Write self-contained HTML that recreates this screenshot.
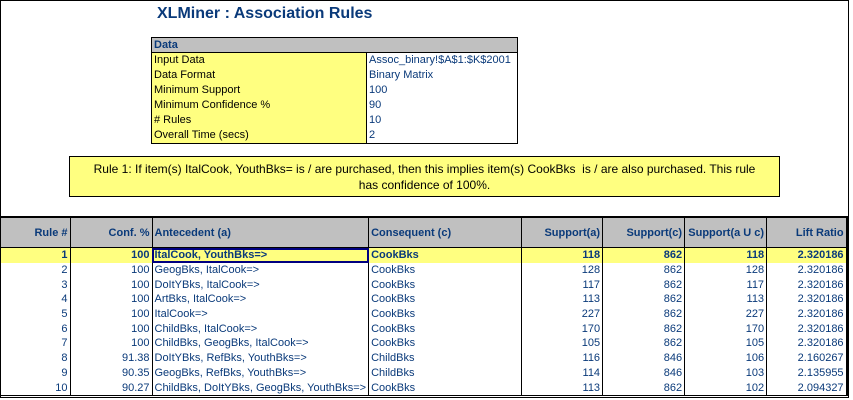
<!DOCTYPE html><html><head><style>
body{margin:0;width:853px;height:400px;background:#fff;position:relative;overflow:hidden;font-family:"Liberation Sans",Arial,sans-serif;font-size:11px;color:#0a3a7a}
.outer{position:absolute;left:0;top:0;width:847px;height:397px;border:1px solid #000;border-bottom:none}
.title{position:absolute;left:157px;top:5px;font-size:16px;font-weight:bold;color:#0a3a7a}
.d{position:absolute;left:151px;top:37px;border-collapse:collapse;border:1px solid #000}
.d td{height:15px;padding:0 2px;line-height:15px;color:#0a3a7a;white-space:nowrap}
.d td.k{background:#ffff80;color:#000;width:210px;border-right:1px solid #000}
.d td.v{width:146px;background:#fff}
.d .h{background:#c0c0c0;font-weight:bold;border-bottom:1px solid #000;height:14px;line-height:14px}
.rule{position:absolute;left:69px;top:156px;width:711px;height:41px;background:#ffff80;border:1px solid #000;text-align:center;color:#000;font-size:12px;line-height:16px;box-sizing:border-box;padding-top:4px}
.m{position:absolute;left:1px;top:216px;border-collapse:collapse;border-top:2px solid #000;border-right:2px solid #000;border-bottom:3px double #000}
.m td{height:14.7px;line-height:14px;padding:0 2px;white-space:nowrap;border-right:1px solid #000;text-align:right;color:#0a3a7a}
.m td.l{text-align:left}
.m tr.hd td{background:#c0c0c0;font-weight:bold;height:29px;border-bottom:1px solid #000}
.m tr.y td{background:#ffff80;font-weight:bold}
</style></head><body>
<div class="outer"></div>
<div class="title">XLMiner : Association Rules</div>
<table class="d">
<tr><td class="h" colspan="2">Data</td></tr>
<tr><td class="k">Input Data</td><td class="v">Assoc_binary!$A$1:$K$2001</td></tr>
<tr><td class="k">Data Format</td><td class="v">Binary Matrix</td></tr>
<tr><td class="k">Minimum Support</td><td class="v">100</td></tr>
<tr><td class="k">Minimum Confidence %</td><td class="v">90</td></tr>
<tr><td class="k"># Rules</td><td class="v">10</td></tr>
<tr><td class="k">Overall Time (secs)</td><td class="v">2</td></tr>
</table>
<div class="rule">Rule 1: If item(s) ItalCook, YouthBks= is / are purchased, then this implies item(s) CookBks&nbsp; is / are also purchased. This rule<br>has confidence of 100%.</div>
<table class="m">
<colgroup><col style="width:69px"><col style="width:82px"><col style="width:215px"><col style="width:153px"><col style="width:81px"><col style="width:82px"><col style="width:82px"><col style="width:80px"></colgroup>
<tr class="hd"><td>Rule #</td><td>Conf. %</td><td class="l">Antecedent (a)</td><td class="l">Consequent (c)</td><td>Support(a)</td><td>Support(c)</td><td>Support(a U c)</td><td>Lift Ratio</td></tr>
<tr class="y"><td>1</td><td>100</td><td class="l" style="outline:2px solid #000080;outline-offset:-2px">ItalCook, YouthBks=&gt;</td><td class="l">CookBks</td><td>118</td><td>862</td><td>118</td><td>2.320186</td></tr>
<tr><td>2</td><td>100</td><td class="l">GeogBks, ItalCook=&gt;</td><td class="l">CookBks</td><td>128</td><td>862</td><td>128</td><td>2.320186</td></tr>
<tr><td>3</td><td>100</td><td class="l">DoItYBks, ItalCook=&gt;</td><td class="l">CookBks</td><td>117</td><td>862</td><td>117</td><td>2.320186</td></tr>
<tr><td>4</td><td>100</td><td class="l">ArtBks, ItalCook=&gt;</td><td class="l">CookBks</td><td>113</td><td>862</td><td>113</td><td>2.320186</td></tr>
<tr><td>5</td><td>100</td><td class="l">ItalCook=&gt;</td><td class="l">CookBks</td><td>227</td><td>862</td><td>227</td><td>2.320186</td></tr>
<tr><td>6</td><td>100</td><td class="l">ChildBks, ItalCook=&gt;</td><td class="l">CookBks</td><td>170</td><td>862</td><td>170</td><td>2.320186</td></tr>
<tr><td>7</td><td>100</td><td class="l">ChildBks, GeogBks, ItalCook=&gt;</td><td class="l">CookBks</td><td>105</td><td>862</td><td>105</td><td>2.320186</td></tr>
<tr><td>8</td><td>91.38</td><td class="l">DoItYBks, RefBks, YouthBks=&gt;</td><td class="l">ChildBks</td><td>116</td><td>846</td><td>106</td><td>2.160267</td></tr>
<tr><td>9</td><td>90.35</td><td class="l">GeogBks, RefBks, YouthBks=&gt;</td><td class="l">ChildBks</td><td>114</td><td>846</td><td>103</td><td>2.135955</td></tr>
<tr><td>10</td><td>90.27</td><td class="l">ChildBks, DoItYBks, GeogBks, YouthBks=&gt;</td><td class="l">CookBks</td><td>113</td><td>862</td><td>102</td><td>2.094327</td></tr>
</table>
</body></html>
